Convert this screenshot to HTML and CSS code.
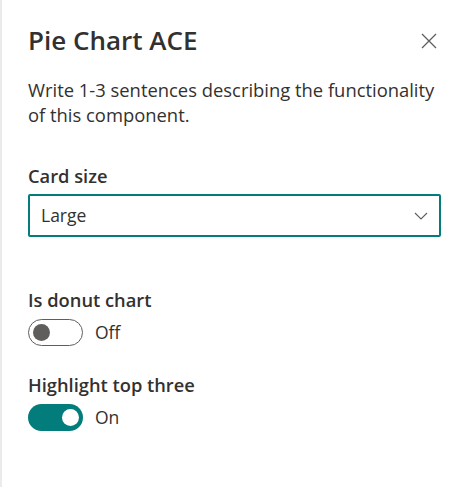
FILE: index.html
```html
<!DOCTYPE html>
<html lang="en">
<head>
<meta charset="utf-8">
<title>Pie Chart ACE</title>
<link rel="stylesheet" href="styles.css">
</head>
<body>
<div class="panel">
  <div class="header">
    <h1 class="title">Pie Chart ACE</h1>
    <button class="close" aria-label="Close">
      <svg width="16" height="16" viewBox="0 0 16 16"><path d="M1 1 L15 15 M15 1 L1 15" stroke="#605e5c" stroke-width="1.3" fill="none"/></svg>
    </button>
  </div>
  <p class="desc">Write 1-3 sentences describing the functionality of this component.</p>

  <div class="field field-dropdown">
    <label class="label">Card size</label>
    <div class="dropdown">
      <span class="dropdown-text">Large</span>
      <svg class="chevron" width="14" height="8" viewBox="0 0 14 8"><path d="M1 1 L7 7 L13 1" stroke="#605e5c" stroke-width="1.1" fill="none"/></svg>
    </div>
  </div>

  <div class="field field-toggle first">
    <label class="label">Is donut chart</label>
    <div class="toggle-row">
      <span class="toggle off"><span class="thumb"></span></span>
      <span class="state">Off</span>
    </div>
  </div>

  <div class="field field-toggle">
    <label class="label">Highlight top three</label>
    <div class="toggle-row">
      <span class="toggle on"><span class="thumb"></span></span>
      <span class="state">On</span>
    </div>
  </div>
</div>
</body>
</html>
```

FILE: styles.css
```css
html, body {
  margin: 0;
  padding: 0;
  background: #ffffff;
}
body {
  font-family: "Open Sans", "Noto Sans", sans-serif;
  color: #323130;
}
.panel {
  box-sizing: border-box;
  height: 487px;
  border-left: 2px solid #edebe9;
  padding: 22px 26px 0 26px;
}
.header {
  display: flex;
  justify-content: space-between;
  align-items: flex-start;
}
.title {
  margin: 0;
  font-size: 26px;
  line-height: 36px;
  font-weight: 600;
  color: #323130;
}
.close {
  border: 0;
  background: none;
  padding: 0;
  margin: 11px 4px 0 0;
  width: 16px;
  height: 16px;
  display: block;
}
.close svg { display: block; }
.desc {
  margin: 19px 0 0 0;
  font-size: 18.4px;
  line-height: 25px;
}
.label {
  display: block;
  font-size: 18.3px;
  line-height: 25px;
  font-weight: 600;
}
.field-dropdown {
  margin-top: 36px;
}
.dropdown {
  margin-top: 6px;
  box-sizing: border-box;
  height: 43px;
  border: 2px solid #037c7c;
  border-radius: 2px;
  display: flex;
  align-items: center;
  justify-content: space-between;
  padding: 0 11px 0 11px;
}
.dropdown-text {
  font-size: 17.5px;
  line-height: 25px;
}
.chevron { display: block; }
.field-toggle { margin-top: 26px; }
.field-toggle.first { margin-top: 50px; }
.toggle-row {
  margin-top: 7px;
  display: flex;
  align-items: center;
  gap: 12px;
}
.toggle {
  box-sizing: border-box;
  width: 55px;
  height: 27px;
  border-radius: 14px;
  display: flex;
  align-items: center;
  padding: 0 4px;
}
.toggle .thumb {
  width: 17px;
  height: 17px;
  border-radius: 50%;
}
.toggle.off {
  border: 1px solid #605e5c;
  background: #ffffff;
}
.toggle.off .thumb { background: #605e5c; }
.toggle.on {
  background: #037c7c;
  justify-content: flex-end;
}
.toggle.on .thumb { background: #ffffff; }
.state {
  font-size: 17.5px;
  line-height: 25px;
}
```
